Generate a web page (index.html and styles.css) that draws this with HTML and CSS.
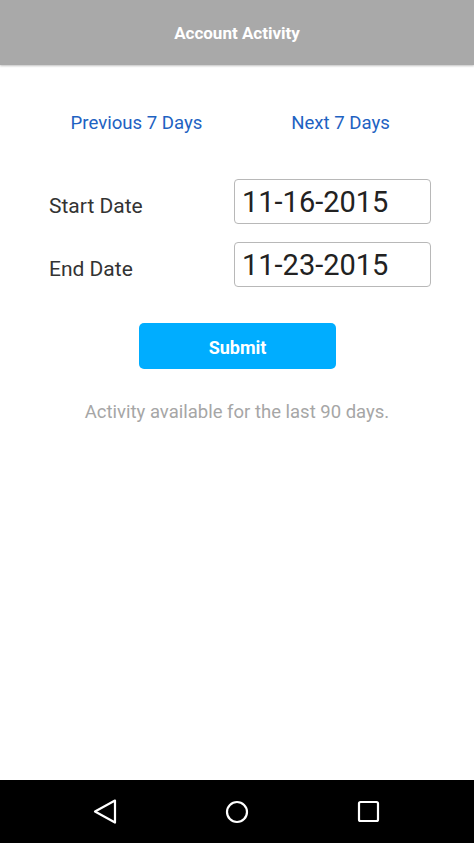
FILE: index.html
```html
<!DOCTYPE html>
<html>
<head>
<meta charset="utf-8">
<link rel="stylesheet" href="styles.css">
</head>
<body>
<div class="screen">
  <header class="appbar">Account Activity</header>
  <main class="content">
    <div class="links">
      <a class="link">Previous 7 Days</a>
      <a class="link">Next 7 Days</a>
    </div>
    <div class="row row-first">
      <span class="label">Start Date</span>
      <div class="field">11-16-2015</div>
    </div>
    <div class="row">
      <span class="label">End Date</span>
      <div class="field">11-23-2015</div>
    </div>
    <div class="actions">
      <button class="submit">Submit</button>
    </div>
    <p class="note">Activity available for the last 90 days.</p>
  </main>
  <nav class="navbar">
    <svg class="nav-icon" width="26" height="26" viewBox="0 0 26 26"><path d="M23 1.5 L3 12.5 L23 23.5 Z" fill="none" stroke="#fff" stroke-width="2.2" stroke-linejoin="round"/></svg>
    <svg class="nav-icon" width="26" height="26" viewBox="0 0 26 26"><circle cx="13" cy="13" r="10" fill="none" stroke="#fff" stroke-width="2.2"/></svg>
    <svg class="nav-icon" width="26" height="26" viewBox="0 0 26 26"><rect x="3" y="3" width="19" height="19" rx="1.5" fill="none" stroke="#fff" stroke-width="2.2"/></svg>
  </nav>
</div>
</body>
</html>
```

FILE: styles.css
```css
html, body {
  margin: 0;
  padding: 0;
  background: #fff;
}
body {
  font-family: Roboto, "Noto Sans", sans-serif;
}
.screen {
  width: 474px;
  height: 843px;
  display: flex;
  flex-direction: column;
}
.appbar {
  height: 65px;
  flex: none;
  background: #a9a9a9;
  color: #fff;
  font-weight: 700;
  font-size: 17px;
  display: flex;
  align-items: center;
  justify-content: center;
  box-shadow: 0 1px 2px rgba(0,0,0,0.25);
  box-sizing: border-box;
  padding-top: 1px;
}
.content {
  flex: 1;
  display: flex;
  flex-direction: column;
}
.links {
  display: flex;
  padding-top: 46px;
  height: 24px;
}
.link {
  color: #1e62c2;
  font-size: 18.6px;
  line-height: 24px;
  text-align: center;
}
.link:first-child {
  width: 273px;
}
.link:last-child {
  width: 135px;
}
.row {
  display: flex;
  align-items: center;
  padding-left: 49px;
  margin-top: 18px;
}
.row-first {
  margin-top: 44px;
}
.label {
  width: 185px;
  font-size: 21px;
  color: #333;
  padding-top: 8px;
}
.field {
  width: 197px;
  height: 45px;
  box-sizing: border-box;
  border: 1px solid #b8b8b8;
  border-radius: 4px;
  font-size: 29px;
  color: #222;
  padding-left: 7px;
  display: flex;
  align-items: center;
}
.actions {
  display: flex;
  justify-content: center;
  margin-top: 36px;
}
.submit {
  width: 197px;
  height: 46px;
  border: none;
  border-radius: 5px;
  background: #00adff;
  color: #fff;
  font-family: Roboto, "Noto Sans", sans-serif;
  font-weight: 700;
  font-size: 18px;
  padding: 2px 0 0;
  margin-left: 1px;
}
.note {
  margin: 32px 0 0;
  text-align: center;
  font-size: 18.5px;
  color: #a6a6a6;
}
.navbar {
  height: 63px;
  flex: none;
  background: #000;
  display: flex;
  align-items: center;
  gap: 106px;
  padding-left: 92px;
}
```
